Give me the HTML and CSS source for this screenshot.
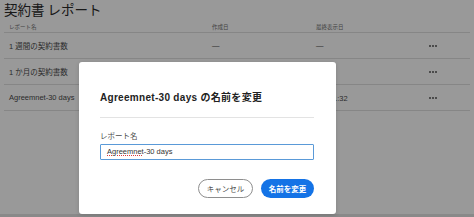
FILE: index.html
```html
<!DOCTYPE html>
<html lang="ja">
<head>
    <meta charset="UTF-8">
    <title>契約書 レポート</title>
    <link rel="stylesheet" href="styles.css">
</head>
<body>
    <div class="page">
        <h1 class="page-title">契約書 レポート</h1>
        <div class="report-table">
            <div class="row head">
                <span>レポート名</span>
                <span>作成日</span>
                <span>最終表示日</span>
                <span></span>
            </div>
            <div class="row">
                <span>1 週間の契約書数</span>
                <span>—</span>
                <span>—</span>
                <span class="more"><i></i><i></i><i></i></span>
            </div>
            <div class="row">
                <span>1 か月の契約書数</span>
                <span></span>
                <span></span>
                <span class="more"><i></i><i></i><i></i></span>
            </div>
            <div class="row">
                <span>Agreemnet-30 days</span>
                <span></span>
                <span>今日 1:32</span>
                <span class="more"><i></i><i></i><i></i></span>
            </div>
        </div>
        <div class="footer-strip"></div>
    </div>

    <div class="overlay"></div>

    <div class="dialog">
        <h2 class="dialog-title">Agreemnet-30 days の名前を変更</h2>
        <hr class="dialog-divider">
        <label class="field-label">レポート名</label>
        <div class="text-field"><span class="misspelled">Agreemnet</span>-30 days</div>
        <div class="dialog-buttons">
            <button class="btn btn-secondary">キャンセル</button>
            <button class="btn btn-primary">名前を変更</button>
        </div>
    </div>
</body>
</html>
```

FILE: styles.css
```css
body {
    margin: 0;
    width: 474px;
    height: 217px;
    overflow: hidden;
    background: #fff;
    font-family: "Liberation Sans", "Noto Sans CJK JP", sans-serif;
    position: relative;
}
.page {
    height: 217px;
    display: flex;
    flex-direction: column;
}
.page-title {
    margin: 0;
    padding-left: 4px;
    height: 17px;
    line-height: 19px;
    font-size: 13.5px;
    font-weight: normal;
    color: #2a2a2a;
    font-family: "Noto Sans CJK JP", sans-serif;
}
.report-table {
    margin: 0 4px;
}
.row {
    display: grid;
    grid-template-columns: 208px 104px 109px 1fr;
    align-items: center;
    box-sizing: border-box;
    height: 26px;
    border-bottom: 1px solid #e0e0e0;
    font-size: 7.5px;
    color: #4a4a4a;
}
.row span:first-child {
    padding-left: 5px;
}
.row.head {
    height: 16px;
    align-items: end;
    padding-bottom: 1px;
    font-size: 5.5px;
    color: #707070;
}
.more {
    display: flex;
    gap: 1px;
    padding-left: 4px;
}
.more i {
    width: 2px;
    height: 2px;
    border-radius: 50%;
    background: #555;
}
.footer-strip {
    margin-top: auto;
    height: 3px;
    background: #e4e4e4;
}
.overlay {
    position: absolute;
    inset: 0;
    background: rgba(0,0,0,0.4);
}
.dialog {
    position: absolute;
    left: 79px;
    top: 62px;
    width: 214px;
    height: 123px;
    padding: 29px 22px 0 21px;
    background: #fff;
    border-radius: 3px;
    box-shadow: 0 1px 4px rgba(0,0,0,0.15);
}
.dialog-title {
    margin: 0;
    font-size: 10px;
    line-height: 13px;
    font-weight: bold;
    letter-spacing: 0.3px;
    color: #222;
}
.dialog-divider {
    margin: 13px 0 0;
    border: none;
    border-top: 1px solid #e3e3e3;
}
.field-label {
    display: block;
    margin-top: 13px;
    font-size: 7.5px;
    line-height: 11px;
    color: #4b4b4b;
}
.text-field {
    margin-top: 2px;
    height: 14px;
    border: 1px solid #5a9ad8;
    border-radius: 1px;
    padding-left: 6px;
    font-size: 7.5px;
    line-height: 14px;
    color: #333;
}
.misspelled {
    text-decoration: underline dotted #d83a3a;
    text-underline-offset: 1px;
}
.dialog-buttons {
    display: flex;
    justify-content: flex-end;
    gap: 8px;
    margin-top: 19px;
}
.btn {
    height: 19px;
    border-radius: 10px;
    font-family: "Liberation Sans", "Noto Sans CJK JP", sans-serif;
    font-size: 7.5px;
    padding: 0;
}
.btn-secondary {
    width: 55px;
    background: #fff;
    border: 1px solid #8e8e8e;
    color: #4b4b4b;
}
.btn-primary {
    width: 53px;
    background: #1473e6;
    border: none;
    color: #fff;
    font-weight: bold;
}
```
